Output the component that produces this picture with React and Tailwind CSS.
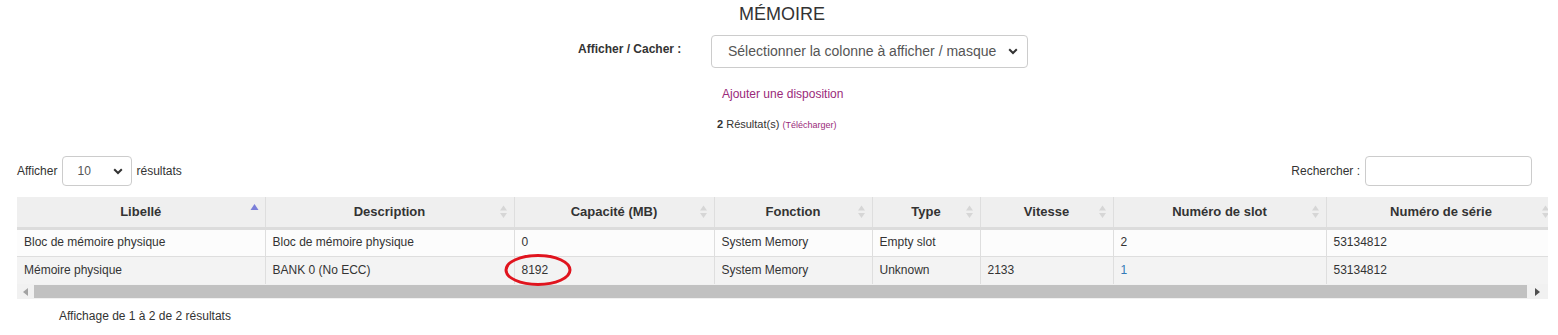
import React from "react";

const columns = [
  { label: "Libellé", width: 248, sort: "asc" },
  { label: "Description", width: 249 },
  { label: "Capacité (MB)", width: 200 },
  { label: "Fonction", width: 158 },
  { label: "Type", width: 108 },
  { label: "Vitesse", width: 133 },
  { label: "Numéro de slot", width: 213 },
  { label: "Numéro de série", width: 230 },
];

const rows = [
  ["Bloc de mémoire physique", "Bloc de mémoire physique", "0", "System Memory", "Empty slot", "", "2", "53134812"],
  ["Mémoire physique", "BANK 0 (No ECC)", "8192", "System Memory", "Unknown", "2133", "1", "53134812"],
];

const SortIcon = ({ dir }) => {
  if (dir === "asc") {
    return (
      <svg width="9" height="14" viewBox="0 0 9 14" className="absolute right-[6px] top-[6px]">
        <path d="M4.5 1 L8.5 7 L0.5 7 Z" fill="#7b7fd9" />
      </svg>
    );
  }
  return (
    <svg width="9" height="14" viewBox="0 0 9 14" className="absolute right-[6px] top-[8px]">
      <path d="M4.5 0.5 L8 5.5 L1 5.5 Z" fill="#d6d6d6" />
      <path d="M4.5 13 L8 8 L1 8 Z" fill="#d6d6d6" />
    </svg>
  );
};

const Chevron = () => (
  <svg width="10" height="7" viewBox="0 0 10 7">
    <path d="M1.2 1.3 L5 5 L8.8 1.3" fill="none" stroke="#333" strokeWidth="2" />
  </svg>
);

export default function App() {
  return (
    <div className="w-[1558px] h-[335px] bg-white text-[#333] font-['Liberation_Sans',Arial,sans-serif] overflow-hidden">
      <h2 className="text-center text-[18px] leading-[20px] pt-[4px] pl-[6px]">MÉMOIRE</h2>

      <div className="flex items-center mt-[11px] h-[32px]">
        <span className="ml-[578px] text-[12px] font-bold w-[133px] -mt-[4px]">Afficher / Cacher :</span>
        <div className="w-[317px] h-[33px] border border-[#ccc] rounded-[4px] flex items-center justify-between pl-[16px] pr-[9px] text-[14px] text-[#555]">
          <span>Sélectionner la colonne à afficher / masque</span>
          <Chevron />
        </div>
      </div>

      <div className="mt-[20px] ml-[722px] text-[12px] leading-[14px] text-[#9a2a7a]">Ajouter une disposition</div>

      <div className="mt-[16px] ml-[717px] text-[11px] leading-[14px]">
        <span className="font-bold">2</span> Résultat(s){" "}
        <span className="text-[9px] text-[#9a2a7a]">(Télécharger)</span>
      </div>

      <div className="flex items-center justify-between mt-[24px] px-[17px] h-[30px]">
        <div className="flex items-center text-[12px] gap-[4px]">
          <span>Afficher</span>
          <div className="w-[70px] h-[30px] border border-[#ccc] rounded-[4px] flex items-center justify-between pl-[14px] pr-[8px] text-[12px] text-[#555] ml-[1px]">
            <span>10</span>
            <Chevron />
          </div>
          <span>résultats</span>
        </div>
        <div className="flex items-center text-[12px] gap-[5px] mr-[9px]">
          <span>Rechercher :</span>
          <div className="w-[167px] h-[30px] border border-[#ccc] rounded-[4px]" />
        </div>
      </div>

      <div className="relative ml-[17px] mt-[11px] w-[1531px] overflow-hidden">
        <table className="table-fixed border-collapse text-[12px]" style={{ width: columns.reduce((s, c) => s + c.width, 0) }}>
          <colgroup>
            {columns.map((c) => (
              <col key={c.label} style={{ width: c.width }} />
            ))}
          </colgroup>
          <thead>
            <tr className="bg-[#efefef] h-[31px]">
              {columns.map((c) => (
                <th
                  key={c.label}
                  className="relative font-bold text-[13px] text-center border-r border-[#dedede] border-b-[3px] border-b-[#dcdcdc] px-[18px]"
                >
                  {c.label}
                  <SortIcon dir={c.sort} />
                </th>
              ))}
            </tr>
          </thead>
          <tbody>
            {rows.map((r, i) => (
              <tr key={i} className={i % 2 === 0 ? "bg-[#fcfcfc] h-[28px]" : "bg-[#f3f3f3] h-[28px]"}>
                {r.map((v, j) => (
                  <td
                    key={j}
                    className={
                      "pl-[7px] pb-[1px] border-r border-[#dedede] " +
                      (i === 0 ? "border-b border-b-[#dedede] " : "") +
                      (i === 1 && j === 6 ? "text-[#337ab7]" : "text-[#333]")
                    }
                  >
                    {v}
                  </td>
                ))}
              </tr>
            ))}
          </tbody>
        </table>

        <div className="flex items-center h-[15px] bg-[#f1f1f1]">
          <div className="w-[17px] flex justify-center">
            <svg width="5" height="8" viewBox="0 0 5 8">
              <path d="M5 0 L0 4 L5 8 Z" fill="#a3a3a3" />
            </svg>
          </div>
          <div className="h-[13px] w-[1493px] bg-[#c1c1c1]" />
          <div className="w-[21px] flex justify-center">
            <svg width="5" height="8" viewBox="0 0 5 8">
              <path d="M0 0 L5 4 L0 8 Z" fill="#505050" />
            </svg>
          </div>
        </div>

        <svg width="72" height="36" viewBox="0 0 72 36" className="absolute left-[485px] top-[55px]">
          <ellipse cx="36" cy="18" rx="32" ry="14.5" fill="none" stroke="#e0141e" strokeWidth="3" />
        </svg>
      </div>

      <div className="mt-[8px] ml-[59px] text-[12px]">Affichage de 1 à 2 de 2 résultats</div>
    </div>
  );
}
